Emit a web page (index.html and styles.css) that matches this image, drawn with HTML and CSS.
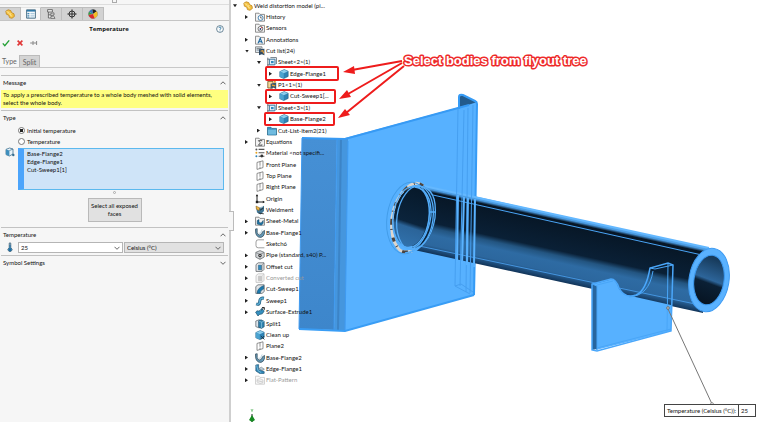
FILE: index.html
```html
<!DOCTYPE html>
<html lang="en">
<head>
<meta charset="utf-8">
<title>Temperature</title>
<link rel="stylesheet" href="styles.css">
</head>
<body>
<svg class="defs" aria-hidden="true">
  <defs>
    <symbol id="part" viewBox="0 0 10 10"><path d="M.8 2.2 3.2.8 5.8 1.6 6.6 3.6 9 4.8 9.4 7.4 7 9.3 4.4 8.6 3.8 6.2 1.4 5.2Z" fill="#f5c242" stroke="#b87d14" stroke-width=".7"/><path d="M1.4 2.6 3.8 3.4 4.4 5.6M6.2 4 5 6l2 1.2" fill="none" stroke="#fff0b0" stroke-width=".7"/></symbol>
    <symbol id="folder" viewBox="0 0 10 10"><path d="M.5 9.2V1.2H4L5 2.4H9.5V9.2Z" fill="#f3f3f3" stroke="#777" stroke-width=".8"/></symbol>
    <symbol id="history" viewBox="0 0 10 10"><use href="#folder"/><circle cx="5.6" cy="5.9" r="2.5" fill="#fff" stroke="#3a78a8" stroke-width=".9"/><path d="M5.6 4.4V6H7" fill="none" stroke="#222" stroke-width=".6"/></symbol>
    <symbol id="sensors" viewBox="0 0 10 10"><use href="#folder"/><circle cx="5.4" cy="5.8" r="2.4" fill="#fff" stroke="#555" stroke-width=".8"/><path d="M5.4 5.8 7.2 4" stroke="#d22" stroke-width=".9"/><circle cx="5.4" cy="6" r=".9" fill="#347"/></symbol>
    <symbol id="annotations" viewBox="0 0 10 10"><use href="#folder"/><path d="M3 8.4 5.2 3.4 7.4 8.4M3.8 6.8H6.7" fill="none" stroke="#17639c" stroke-width="1.1"/></symbol>
    <symbol id="cutlist" viewBox="0 0 10 10"><path d="M.5.8H7V6.5H.5Z" fill="#dbe6ee" stroke="#666" stroke-width=".7"/><path d="M1.6 2.4H6M1.6 4H5" stroke="#444" stroke-width=".6"/><path d="M4 3.2 9.4 2.8V9.3L6.8 8.3 4 9.2Z" fill="#304c66"/><path d="M5.6 5.2 7.8 4.6 8.6 7.4" fill="none" stroke="#f0a93a" stroke-width="1.1"/></symbol>
    <symbol id="sheet" viewBox="0 0 10 10"><path d="M2.4 2.2H8V7.8H2.4Z" fill="#e4f0f8" stroke="#3f7ca3" stroke-width="1"/><path d="M.8.6V9.2M.4 2.2H2.4M.4 7.8H2.4M3.4.6H9.4V7M1 9.4H7" fill="none" stroke="#4d5d69" stroke-width=".8"/><path d="M4 4H6.6V6.2H4Z" fill="#2f89c0"/></symbol>
    <symbol id="profile" viewBox="0 0 10 10"><path d="M.8 1.4H6V8H.8Z" fill="#f4d99b" stroke="#735623" stroke-width=".8"/><path d="M3.6 3.8 9.2 2.6V9.3L6.4 7.6 3.6 9Z" fill="#3d5970"/><path d="M5 5.2 8.2 5.8" stroke="#f1a02b" stroke-width="1.3"/><circle cx="7.8" cy="1.8" r="1.1" fill="#e69b28"/></symbol>
    <symbol id="body" viewBox="0 0 10 10"><path d="M.8 2.6 5.2.6 9.2 2.2V7.4L4.8 9.6.8 7.8Z" fill="#2f83b5" stroke="#175377" stroke-width=".5"/><path d="M.9 2.7 5.2.8 9 2.3 4.8 4.2Z" fill="#8ccdec"/><path d="M4.8 4.2V9.4L.9 7.7V2.7Z" fill="#4ba3d0"/></symbol>
    <symbol id="bluefolder" viewBox="0 0 10 10"><path d="M.5 9V1.3H4L5 2.4H9.5V9Z" fill="#3593c4" stroke="#1e6185" stroke-width=".7"/><path d="M1 3.6H9V8.6H1Z" fill="#70bbdf"/></symbol>
    <symbol id="equations" viewBox="0 0 10 10"><use href="#folder"/><path d="M7 4.2V3.6H3.4L5.4 5.8 3.4 8.2H7V7.5" fill="none" stroke="#333" stroke-width=".8"/></symbol>
    <symbol id="material" viewBox="0 0 10 10"><path d="M3.6 1.4H9.4M3.6 4.8H9.4M3.6 8.3H9.4" stroke="#555" stroke-width="1.1"/><circle cx="1.4" cy="1.4" r="1" fill="#555"/><circle cx="1.4" cy="4.8" r="1" fill="#e5a21f"/><circle cx="1.4" cy="8.3" r="1" fill="#2b82b8"/><circle cx="6.8" cy="8" r="1.4" fill="#333"/></symbol>
    <symbol id="plane" viewBox="0 0 10 10"><path d="M2 2.4 8 .8V7.6L2 9.4ZM5 1.6V5.8M5 6.6V8.5" fill="none" stroke="#666" stroke-width=".7"/></symbol>
    <symbol id="origin" viewBox="0 0 10 10"><path d="M2 1V8H9" fill="none" stroke="#222" stroke-width="1"/><path d="M2 0 3.2 2.2H.8ZM10 8 7.8 9.2V6.8Z" fill="#222"/><path d="M.8 6.8H3.2V9.2H.8Z" fill="#222"/></symbol>
    <symbol id="weldment" viewBox="0 0 10 10"><path d="M1 1.5 4 3 9 .8V6L5.6 9.4 2 7.6Z" fill="#427796"/><path d="M1 1 4.6 2.8 4 5.6 1.4 4.2Z" fill="#f3b743" stroke="#805b1b" stroke-width=".5"/><path d="M5 5.2 8.6 3M3.4 8 8.8 8.8" stroke="#222" stroke-width=".8"/><path d="M5.4 2.8 8 1.4" stroke="#e9eef2" stroke-width=".8"/></symbol>
    <symbol id="sheetmetal" viewBox="0 0 10 10"><use href="#folder"/><path d="M2.2 4.6 4 3.6V6.4L6.2 7 8.2 4.4V7.2L6.4 9.2 2.2 8Z" fill="#1f76a8" stroke="#123f59" stroke-width=".5"/></symbol>
    <symbol id="baseflange" viewBox="0 0 10 10"><path d="M.4 1 2.2.7V4.5Q2.6 7 4.8 7 7 6.6 7.4 3.8L9.6 2.4V5.2Q8.8 8.8 6 9.4 3.4 9.8 1.6 7.4.4 6 .4 1Z" fill="#6498b5" stroke="#334b59" stroke-width=".7"/><path d="M3.6 5 5.4 5.4 7.2 1.4" fill="none" stroke="#bcd8e5" stroke-width="1"/></symbol>
    <symbol id="sketch" viewBox="0 0 10 10"><path d="M9 .8H3.2Q1 .8 1 3V6.6Q1 8.8 3.2 8.8H9.4" fill="none" stroke="#777" stroke-width=".7"/></symbol>
    <symbol id="pipe" viewBox="0 0 10 10"><path d="M.8 2.4 5 .6 9.2 2.4V7L5 9.4.8 7.2Z" fill="#d3d6d8" stroke="#595e62" stroke-width=".7"/><path d="M.9 2.6 5 4.4 9 2.6M5 4.4V9" fill="none" stroke="#71767a" stroke-width=".7"/><circle cx="5" cy="5.4" r="1.7" fill="#333"/><circle cx="5" cy="5.4" r=".7" fill="#ddd"/></symbol>
    <symbol id="cut" viewBox="0 0 10 10"><path d="M1 2.6 3.2.8H9V7.4L7 9.4H1Z" fill="#e8eaec" stroke="#626669" stroke-width=".8"/><path d="M3.4 3.2H6.6V7.8H3.4Z" fill="#2f8ac0" stroke="#20506e" stroke-width=".5"/><path d="M7 9.2V2.8L9 1" fill="none" stroke="#777" stroke-width=".6"/></symbol>
    <symbol id="cutsweep" viewBox="0 0 10 10"><path d="M.8 2.6 3 .8H9.2V7.6L7 9.4H.8Z" fill="#dfe3e6" stroke="#656b70" stroke-width=".8"/><path d="M2 9.3Q2.3 4 8.7 1.6V5Q5.5 6 5.2 9.3Z" fill="#1b79ae" stroke="#154967" stroke-width=".5"/></symbol>
    <symbol id="sweep" viewBox="0 0 10 10"><path d="M1.2 7.9Q4.8 9.3 4.7 5.4 5 1.6 9 2.2" fill="none" stroke="#225d7d" stroke-width="3"/><path d="M1.4 7.9Q4.8 9.3 4.7 5.4 5 1.6 8.8 2.2" fill="none" stroke="#58a9d1" stroke-width="1.6"/></symbol>
    <symbol id="surface" viewBox="0 0 10 10"><path d="M.6 5.2Q2 3 3.6 4 5 4.4 6.6 1.4L9.2 3.8Q7.5 7.8 5.8 7.2 4.4 6.8 3 9Z" fill="#358fbe" stroke="#1e526f" stroke-width=".7"/><path d="M6.4 3 8.8.8M7 .5H9.4V2.8" fill="none" stroke="#222" stroke-width=".9"/></symbol>
    <symbol id="split" viewBox="0 0 10 10"><path d="M.8 2 4.4.7V9L.8 7.6Z" fill="#dce4ea" stroke="#565f66" stroke-width=".7"/><path d="M3.6 1.8 6 .8 9.2 2.3V7.8L6.5 9.4 3.6 8.2Z" fill="#2f82ae" stroke="#1d4d68" stroke-width=".6"/><path d="M3.8 2 6.5 3.2V9M6.5 3.2 9 2.4" stroke="#9acbe3" stroke-width=".6" fill="none"/></symbol>
    <symbol id="cleanup" viewBox="0 0 10 10"><use href="#body"/><path d="M5.8 6 9.4 9.4M9.2 6 6 9.4" stroke="#17384b" stroke-width="1"/></symbol>
    <symbol id="edgeflange" viewBox="0 0 10 10"><path d="M.8 1 3.6.6V5.4L9.2 7.6V9.4L5.2 9.8.8 7Z" fill="#2e86b6" stroke="#225270" stroke-width=".6"/><path d="M4 4.4 6.4 3.2 9.4 5.2 7 6.5Z" fill="#bfd0da" stroke="#53616a" stroke-width=".5"/><path d="M1.6 1.4 3 6.6 6.2 8.6" stroke="#86c3df" stroke-width=".8" fill="none"/></symbol>
    <symbol id="flatpattern" viewBox="0 0 10 10"><use href="#folder"/><path d="M2 4.4 4.6 3.6 8 5V7.8L5 8.6 2 7Z" fill="#ddd" stroke="#777" stroke-width=".7"/><path d="M2.2 5.6 7.8 7" stroke="#666" stroke-width=".7"/></symbol>
    <symbol id="chevup" viewBox="0 0 6 4"><path d="M.5 3.3 3 .8 5.5 3.3" fill="none" stroke="#555" stroke-width=".9"/></symbol>
    <symbol id="chevdown" viewBox="0 0 6 4"><path d="M.5.8 3 3.3 5.5.8" fill="none" stroke="#555" stroke-width=".9"/></symbol>
  </defs>
</svg>

<main class="app">
  <aside class="panel">
    <div class="grip"></div>
    <nav class="managers">
      <button class="manager" aria-label="Feature tree"><svg class="ico"><use href="#part"/></svg></button>
      <button class="manager active" aria-label="Properties"><svg class="ico" viewBox="0 0 10 10"><path d="M.6.8H9.4V9.2H.6Z" fill="#fff" stroke="#3e6680" stroke-width=".9"/><path d="M.8 1H9.2V2.6H.8Z" fill="#2e79a8"/><path d="M1.4 4.4H3.4M1.4 6.2H3.4M1.4 8H3.4" stroke="#2e79a8" stroke-width="1"/><path d="M4.4 4.4H8.6M4.4 6.2H8.6M4.4 8H8.6" stroke="#8ab6d0" stroke-width=".8"/></svg></button>
      <button class="manager" aria-label="Configurations"><svg class="ico" viewBox="0 0 10 10"><path d="M1.6.6H6.4V3H1.6ZM2.4 3V9H4.6M2.4 5.8H4.8" fill="#eee" stroke="#555" stroke-width=".8"/><path d="M4.8 4.4 8 3.8V6L4.8 6.6ZM4.8 7.8 7.6 6.8 9 9.4H4.8Z" fill="#ddd" stroke="#555" stroke-width=".7"/></svg></button>
      <button class="manager" aria-label="Dimensions"><svg class="ico" viewBox="0 0 10 10"><circle cx="5" cy="5" r="3" fill="none" stroke="#222" stroke-width=".9"/><path d="M5 .4V9.6M.4 5H9.6" stroke="#222" stroke-width=".9"/></svg></button>
      <button class="manager" aria-label="Display"><svg class="ico" viewBox="0 0 10 10"><circle cx="5" cy="5" r="4.5" fill="#ddd" stroke="#444" stroke-width=".4"/><path d="M5 5 .6 6A4.5 4.5 0 0 1 1.2 2.8Z" fill="#35a046"/><path d="M5 5 1.2 2.8A4.5 4.5 0 0 1 4.4.6Z" fill="#3478be"/><path d="M5 5 4.4.6A4.5 4.5 0 0 1 8.6 2.4Z" fill="#222"/><path d="M5 5 8.6 2.2A4.5 4.5 0 0 1 6.6 9.2Z" fill="#f3bd25"/><path d="M5 5 6.6 9.3A4.5 4.5 0 0 1 .6 6Z" fill="#d9292d"/></svg></button>
    </nav>
    <header class="title">
      <h1>Temperature</h1>
      <button class="help" aria-label="Help"><svg viewBox="0 0 8 8"><circle cx="4" cy="4" r="3.4" fill="#fff" stroke="#496b80" stroke-width=".8"/><path d="M2.9 3.1Q3 2 4 2T5.1 3.1Q5 3.8 4 4.2V4.9M4 5.6V6.3" fill="none" stroke="#2f78a5" stroke-width=".9"/></svg></button>
    </header>
    <div class="actions">
      <button aria-label="OK"><svg viewBox="0 0 8 8"><path d="M.8 4.4 2.8 6.6 7.2 1.4" fill="none" stroke="#24a035" stroke-width="1.4"/></svg></button>
      <button aria-label="Cancel"><svg viewBox="0 0 8 8"><path d="M1.6 1.6 6.4 6.4M6.4 1.6 1.6 6.4" stroke="#e03535" stroke-width="1.6"/></svg></button>
      <button aria-label="Keep visible"><svg viewBox="0 0 8 8"><path d="M.2 4H3M3 2V6M3 4H6.6M6.6 2V6" fill="none" stroke="#888" stroke-width="1"/></svg></button>
    </div>
    <nav class="tabs">
      <button class="tab current">Type</button>
      <button class="tab">Split</button>
    </nav>

    <section class="group first">
      <h2>Message <svg class="chev"><use href="#chevup"/></svg></h2>
      <p class="message">To apply a prescribed temperature to a whole body meshed with solid elements, select the whole body.</p>
    </section>

    <section class="group">
      <h2>Type <svg class="chev"><use href="#chevup"/></svg></h2>
      <label class="radio"><input type="radio" name="kind" checked>Initial temperature</label>
      <label class="radio"><input type="radio" name="kind">Temperature</label>
      <div class="field">
        <svg class="ico" viewBox="0 0 10 10"><path d="M1 2.4 4.6 1 8 2V7L4.4 9 1 7.6Z" fill="#e8f2f8" stroke="#3c6f8e" stroke-width=".8"/><path d="M1 2.4 4.4 3.6V9L1 7.6Z" fill="#3f8fbd"/><path d="M4.4 3.6 8 2" stroke="#3c6f8e" stroke-width=".7"/><circle cx="8.3" cy="8" r="1.2" fill="#346d8f"/></svg>
        <ul class="selection"><li>Base-Flange2</li><li>Edge-Flange1</li><li>Cut-Sweep1[1]</li></ul>
      </div>
      <div class="resize"></div>
      <button class="expose">Select all exposed faces</button>
    </section>

    <section class="group">
      <h2>Temperature <svg class="chev"><use href="#chevup"/></svg></h2>
      <div class="field">
        <svg class="ico" viewBox="0 0 10 10"><path d="M4.2 1.2Q5 .2 5.8 1.2V5.8A2 2 0 1 1 4.2 5.8Z" fill="#9fc3d8" stroke="#2b4f66" stroke-width=".7"/><path d="M5 3V7" stroke="#1a6ea5" stroke-width="1"/><circle cx="5" cy="7.5" r="1.6" fill="#1a6ea5"/></svg>
        <div class="combo value"><input type="text" value="25" aria-label="Temperature value"><svg class="chev"><use href="#chevdown"/></svg></div>
        <div class="combo unit"><select aria-label="Unit"><option>Celsius (°C)</option></select><svg class="chev"><use href="#chevdown"/></svg></div>
      </div>
    </section>

    <section class="group">
      <h2>Symbol Settings <svg class="chev"><use href="#chevdown"/></svg></h2>
    </section>
    <div class="splitter"></div>
  </aside>

  <section class="viewport">
    <svg class="scene" viewBox="231 0 537 422" preserveAspectRatio="xMinYMin meet" role="img" aria-label="Pipe through bent plate">
      <defs>
        <linearGradient id="tube" gradientUnits="userSpaceOnUse" x1="580" y1="219" x2="566" y2="283">
          <stop offset="0" stop-color="#5ab0f7"/><stop offset=".05" stop-color="#4a9ae0"/><stop offset=".09" stop-color="#071625"/><stop offset=".54" stop-color="#0a2036"/><stop offset=".62" stop-color="#235581"/><stop offset=".72" stop-color="#2e6ba3"/><stop offset=".88" stop-color="#2c679e"/><stop offset="1" stop-color="#12355a"/>
        </linearGradient>
        <linearGradient id="bore" x1="0" y1="0" x2="-.12" y2="1"><stop offset="0" stop-color="#173b5c"/><stop offset=".42" stop-color="#2d659a"/><stop offset=".5" stop-color="#0b2035"/><stop offset="1" stop-color="#06121f"/></linearGradient>
        <linearGradient id="hole" x1="0" y1="0" x2="-.1" y2="1"><stop offset="0" stop-color="#071a2c"/><stop offset=".54" stop-color="#0b243c"/><stop offset=".62" stop-color="#2b6499"/><stop offset="1" stop-color="#3274b0"/></linearGradient>
        <linearGradient id="side" x1="0" y1="0" x2="0" y2="1"><stop offset="0" stop-color="#4690d5"/><stop offset="1" stop-color="#3d86cb"/></linearGradient>
      </defs>
      <path d="M459 97 462 95 477 102V110L459 112Z" fill="#235b8c"/>
      <path d="M345 138 471 104 477 102 475 295 345 331Z" fill="#57b1ff"/>
      <path d="M302 138 337 139 334 330 299 329Z" fill="url(#side)"/>
      <path d="M337 139 348 139 345 331 334 330Z" fill="#4596de"/>
      <path d="M341 139 338 330" stroke="#3c84c7" stroke-width="2"/>
      <path d="M302 138 345 139 469 105" fill="none" stroke="#379af4" stroke-width="2"/>
      <path d="M299 329 345 331 474 295" fill="none" stroke="#399df5" stroke-width="2"/>
      <path d="M302 138 299 329M348 141 345 330M337 139 334 330" fill="none" stroke="#3f9af0" stroke-width="1"/>
      <path d="M459 109V97Q459 94 463 95L475 101Q477 102 477 104L474 295" fill="none" stroke="#369bf5" stroke-width="2"/>
      <path d="M415 183 708 248 703 313 405 248Z" fill="url(#tube)"/>
      <path d="M415 191 702 255" stroke="#4aa4f5" stroke-width="1" fill="none"/>
      <path d="M405 243 700 305" stroke="#4595df" stroke-width="1" fill="none"/>
      <path d="M415 184 709 248" stroke="#64b8ff" stroke-width="2" fill="none"/>
      <path d="M413 182 391 200 390 235 400 254 414 252 428 222Z" fill="#57b1ff"/>
      <ellipse cx="411" cy="218" rx="20" ry="35" transform="rotate(9 411 218)" fill="none" stroke="#57b1ff" stroke-width="3"/>
      <g fill="none" stroke-width="3">
        <path d="M423 186Q416 180 408 187 395 198 392 218 390 238 398 248 402 254 412 251" stroke="#dcd6cf"/>
        <path d="M423 186Q416 180 408 187 395 198 392 218 390 238 398 248 402 254 412 251" stroke="#4a4441" stroke-dasharray="4 5 1 7 6 4 1 8"/>
      </g>
      <path d="M420 185Q438 190 435 219 431 247 412 248Z" fill="#0b253e"/>
      <ellipse cx="411" cy="217" rx="17" ry="30" transform="rotate(8 411 217)" fill="url(#hole)"/>
      <ellipse cx="408" cy="218" rx="21" ry="36" transform="rotate(8 408 218)" fill="none" stroke="#439de9" stroke-width="1"/>
      <g fill="none" stroke="#55adf9" stroke-width="1.3">
        <ellipse cx="411" cy="217" rx="18" ry="31" transform="rotate(8 411 217)"/>
        <ellipse cx="415" cy="218" rx="18" ry="32" transform="rotate(8 415 218)"/>
        <path d="M419 186Q438 188 435 218 430 249 405 253M429 212H436M415 187Q432 190 431 216 427 243 410 250"/>
      </g>
      <g fill="none" stroke="#469ff0" stroke-width="1">
        <path d="M458 109 455 286 470 294M464 110 460 286M468 108 466 292M473 105 470 293M455 286 461 284 473 292"/>
      </g>
      <path d="M458 195 457 262M464 197 462 264M468 198 467 265M475 199 474 267" stroke="#59b2ff" stroke-width="2"/>
      <path d="M594 284 613 279Q616 281 619 289 624 296 631 296L671 305V331L596 350Z" fill="#57b1ff"/>
      <path d="M592 284 597 286 597 349 592 350Z" fill="#27659e"/>
      <path d="M592 350V284L611 279Q616 279 619 288 625 299 636 295 646 291 650 268L668 263 673 265 671 331 597 351Z" fill="none" stroke="#4aa7fb" stroke-width="1.5"/>
      <path d="M653 271Q649 296 629 297M597 285 613 281M668 264 667 331M597 348 671 329M650 268 655 269 673 265M592 284 597 286V350" fill="none" stroke="#49a6f8" stroke-width="1"/>
      <ellipse cx="709" cy="280" rx="20" ry="32" transform="rotate(9 709 280)" fill="#5ab2ff" stroke="#3f9cf3" stroke-width="1"/>
      <ellipse cx="709" cy="280" rx="15" ry="25" transform="rotate(9 709 280)" fill="url(#bore)" stroke="#3c98ee" stroke-width="1"/>
      <path d="M668 309 712 404" stroke="#777" stroke-width="1"/>
      <circle cx="668" cy="308" r="1.4" fill="#bbb" stroke="#555" stroke-width=".6"/>
      <circle cx="712" cy="404" r="1.4" fill="#fff" stroke="#555" stroke-width=".6"/>
      <path d="M252 414V422" stroke="#222" stroke-width="1"/><path d="M249 420 252 415 255 420 252 422Z" fill="#168a22"/><path d="M251 409 252 411 253 409M252 411V412" stroke="#53b35c" stroke-width=".7" fill="none"/>
    </svg>

    <ul class="tree">
      <li class="open"><svg class="ico"><use href="#part"/></svg>Weld distortion model (pi...</li>
      <li class="l1 shut"><svg class="ico"><use href="#history"/></svg>History</li>
      <li class="l1"><svg class="ico"><use href="#sensors"/></svg>Sensors</li>
      <li class="l1 shut"><svg class="ico"><use href="#annotations"/></svg>Annotations</li>
      <li class="l1 open"><svg class="ico"><use href="#cutlist"/></svg>Cut list(24)</li>
      <li class="l2 open"><svg class="ico"><use href="#sheet"/></svg>Sheet&lt;2&gt;(1)</li>
      <li class="l3 shut"><svg class="ico"><use href="#body"/></svg>Edge-Flange1</li>
      <li class="l2 open"><svg class="ico"><use href="#profile"/></svg>P1&lt;1&gt;(1)</li>
      <li class="l3 shut"><svg class="ico"><use href="#body"/></svg>Cut-Sweep1[...</li>
      <li class="l2 open"><svg class="ico"><use href="#sheet"/></svg>Sheet&lt;3&gt;(1)</li>
      <li class="l3 shut"><svg class="ico"><use href="#body"/></svg>Base-Flange2</li>
      <li class="l2 shut"><svg class="ico"><use href="#bluefolder"/></svg>Cut-List-Item2(21)</li>
      <li class="l1 shut"><svg class="ico"><use href="#equations"/></svg>Equations</li>
      <li class="l1"><svg class="ico"><use href="#material"/></svg>Material &lt;not specifi...</li>
      <li class="l1"><svg class="ico"><use href="#plane"/></svg>Front Plane</li>
      <li class="l1"><svg class="ico"><use href="#plane"/></svg>Top Plane</li>
      <li class="l1"><svg class="ico"><use href="#plane"/></svg>Right Plane</li>
      <li class="l1"><svg class="ico"><use href="#origin"/></svg>Origin</li>
      <li class="l1"><svg class="ico"><use href="#weldment"/></svg>Weldment</li>
      <li class="l1 shut"><svg class="ico"><use href="#sheetmetal"/></svg>Sheet-Metal</li>
      <li class="l1 shut"><svg class="ico"><use href="#baseflange"/></svg>Base-Flange1</li>
      <li class="l1"><svg class="ico"><use href="#sketch"/></svg>Sketch6</li>
      <li class="l1 shut"><svg class="ico"><use href="#pipe"/></svg>Pipe (standard, s40) P...</li>
      <li class="l1 shut"><svg class="ico"><use href="#cut"/></svg>Offset cut</li>
      <li class="l1 shut off"><svg class="ico"><use href="#cut"/></svg>Converted cut</li>
      <li class="l1 shut"><svg class="ico"><use href="#cutsweep"/></svg>Cut-Sweep1</li>
      <li class="l1 shut"><svg class="ico"><use href="#sweep"/></svg>Sweep1</li>
      <li class="l1 shut"><svg class="ico"><use href="#surface"/></svg>Surface-Extrude1</li>
      <li class="l1"><svg class="ico"><use href="#split"/></svg>Split1</li>
      <li class="l1"><svg class="ico"><use href="#cleanup"/></svg>Clean up</li>
      <li class="l1"><svg class="ico"><use href="#plane"/></svg>Plane2</li>
      <li class="l1 shut"><svg class="ico"><use href="#baseflange"/></svg>Base-Flange2</li>
      <li class="l1 shut"><svg class="ico"><use href="#edgeflange"/></svg>Edge-Flange1</li>
      <li class="l1 shut off"><svg class="ico"><use href="#flatpattern"/></svg>Flat-Pattern</li>
    </ul>

    <svg class="scene" viewBox="231 0 537 422" preserveAspectRatio="xMinYMin meet">
      <g fill="none" stroke="#ee1c1c" stroke-width="2">
        <rect x="266" y="67" width="72" height="13" rx="1"/>
        <rect x="266" y="90" width="69" height="13" rx="1"/>
        <rect x="265" y="113" width="69" height="12" rx="1"/>
        <path d="M402 61 352 70M402 63 348 94M404 66 346 113"/>
      </g>
      <path d="M343 72 354 66 355 74ZM339 99 347 90 351 97ZM338 118 345 109 350 115Z" fill="#ee1c1c"/>
      <text class="note" x="404" y="65">Select bodies from flyout tree</text>
    </svg>
    <div class="callout"><span>Temperature (Celsius (°C)):</span><output>25</output></div>
  </section>
</main>
</body>
</html>
```
FILE: styles.css
```css
* { box-sizing: border-box; }

body {
  margin: 0;
  font: 6px/8px Lato, "Open Sans", sans-serif;
  color: #111;
  background: #fff;
}

h1, h2, p, ul { margin: 0; padding: 0; }
ul { list-style: none; }

button, input, select {
  font: inherit;
  color: inherit;
  margin: 0;
  padding: 0;
  border: 0;
  border-radius: 0;
  background: none;
  appearance: none;
}

button { display: flex; align-items: center; justify-content: center; }

.defs { position: absolute; width: 0; height: 0; }
.ico { flex: none; width: 10px; height: 10px; }
.chev { flex: none; width: 6px; height: 4px; }

.app { display: flex; min-height: 100vh; }

/* Property panel */
.panel {
  position: relative;
  flex: none;
  width: 231px;
  background: #f6f6f6;
  border-right: 2px solid #cfcfcf;
}

.grip { height: 5px; border-bottom: 1px solid #ddd; }
.grip::before {
  content: "";
  display: block;
  width: 3px;
  height: 2px;
  margin: 0 auto;
  border: 1px solid #aaa;
  border-top: 0;
}

.managers { display: flex; margin-top: 2px; border-bottom: 1px solid #c4c4c4; }
.manager { width: 21px; height: 13px; background: #d2d2d2; border: 1px solid #bdbdbd; border-left: 0; border-bottom: 0; }
.manager.active { width: 20px; background: #f8f8f8; border-top-color: #e4e4e4; }

.title { display: flex; align-items: center; height: 16px; padding: 0 5px 0 2px; }
.title h1 { flex: 1; text-align: center; font: 700 6px/8px "Open Sans", sans-serif; }
.help svg, .actions svg { display: block; width: 8px; height: 8px; }

.actions { display: flex; gap: 6px; height: 18px; padding: 0 2px 6px; }

.tabs { display: flex; height: 13px; border-bottom: 1px solid #c8c8c8; color: #666; }
.tab { padding: 0 2px; font-size: 7px; }
.tab:not(.current) { padding: 0 3px; background: #d4d4d4; border: 1px solid #bbb; border-bottom: 0; }

.group { position: relative; margin: 0 1px; padding-bottom: 2px; border-top: 1px solid #c2c2c2; }
.group.first { margin-top: 7px; }
.group h2 {
  display: flex;
  align-items: center;
  justify-content: space-between;
  height: 14px;
  padding: 0 2px;
  font-size: 6px;
  font-weight: 400;
}

.message { padding: 1px 2px; background: #ffff80; }

.radio { display: flex; align-items: center; gap: 2px; height: 11px; padding-left: 17px; }
.radio input { width: 7px; height: 7px; border: 1px solid #777; border-radius: 50%; background: #fff; }
.radio input:checked { background: radial-gradient(#222 40%, #fff 50%); }

.field { display: flex; gap: 1px; padding: 0 4px; }
.field > .ico { margin-right: 2px; }

.selection {
  flex: 1;
  min-height: 42px;
  margin-top: 1px;
  padding: 1px 3px;
  background: #cfe4f8;
  border: 1px solid #5cb9ee;
  border-left: 6px solid #4ba4fb;
}

.resize { width: 3px; height: 3px; margin: 1px auto 4px; border: 1px solid #aaa; border-radius: 50%; }

.expose {
  width: 54px;
  height: 24px;
  margin: 0 auto 3px;
  border: 1px solid #b9b9b9;
  background: #e1e1e1;
}

.combo { position: relative; display: flex; border: 1px solid #b5b5b5; background: #fff; }
.value { flex: 21; }
.unit { flex: 20; background: #e1e1e1; }
.combo input, .combo select { flex: 1; min-width: 0; height: 9px; padding: 0 2px; }
.combo .chev { position: absolute; right: 2px; top: 3px; pointer-events: none; }

.splitter {
  position: absolute;
  left: 100%;
  top: 50%;
  width: 5px;
  height: 20px;
  border: 1px solid #bbb;
  border-left: 0;
  background: #f6f6f6;
}

/* Graphics area */
.viewport { position: relative; flex: 1; min-width: 0; }
.scene { position: absolute; left: 0; top: 0; width: 100%; pointer-events: none; }

.tree {
  position: relative;
  display: grid;
  grid-auto-rows: 1fr;
  height: 386px;
  white-space: nowrap;
}

.tree li { display: flex; align-items: center; gap: 1px; padding-left: 2px; }
.tree li::before { content: ""; flex: none; width: 3px; height: 4px; margin-right: 6px; }
.tree .open::before { width: 4px; height: 3px; margin-right: 5px; background: #222; clip-path: polygon(0 0, 100% 0, 50% 100%); }
.tree .shut::before { background: #222; clip-path: polygon(0 0, 100% 50%, 0 100%); }
.tree .l1 { padding-left: 14px; }
.tree .l2 { padding-left: 26px; }
.tree .l3 { padding-left: 38px; }
.tree .off { color: #999; }
.tree .off .ico { opacity: .4; filter: grayscale(1); }

.note {
  font: 700 13px "Liberation Sans", Arial, sans-serif;
  fill: #fff;
  stroke: #ee2a2a;
  stroke-width: 3px;
  stroke-linejoin: round;
  paint-order: stroke;
}

.callout {
  position: absolute;
  right: 12px;
  bottom: 5px;
  display: flex;
  border: 1px solid #444;
  background: #fff;
}
.callout span, .callout output { padding: 1px 2px; line-height: 9px; }
.callout output { padding-right: 7px; border-left: 1px solid #444; }
```
